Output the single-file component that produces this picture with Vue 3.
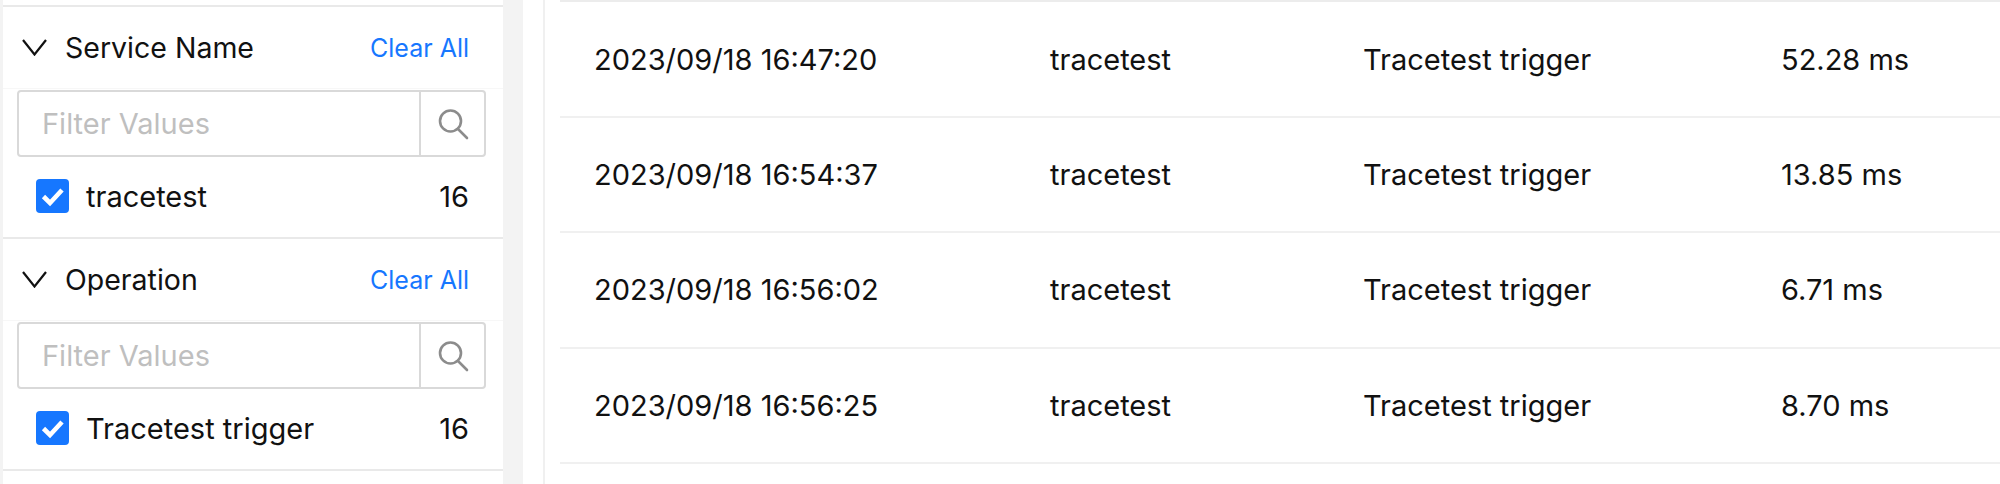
<template>
  <div class="page">
    <aside class="sidebar">
      <div class="stub-top"></div>
      <section v-for="filter in filters" :key="filter.title" class="filter">
        <header class="filter-head">
          <svg class="chevron" viewBox="0 0 25 17" fill="none">
            <path d="M1 1 L12.5 15.5 L24 1" stroke="#111" stroke-width="2.2" />
          </svg>
          <span class="filter-title">{{ filter.title }}</span>
          <a class="clear">Clear All</a>
        </header>
        <div class="search">
          <input class="search-input" type="text" placeholder="Filter Values" />
          <button class="search-btn" type="button">
            <svg viewBox="0 0 32 32" fill="none" stroke="#8c8c8c" stroke-width="2.6">
              <circle cx="13.5" cy="13" r="10.5" />
              <path d="M21 21 L30 30" stroke-linecap="round" />
            </svg>
          </button>
        </div>
        <label class="option">
          <span class="checkbox">
            <svg viewBox="0 0 33 33" fill="none">
              <path d="M7.5 17 L14 23.5 L26 10.5" stroke="#fff" stroke-width="4.6" />
            </svg>
          </span>
          <span class="option-name">{{ filter.option }}</span>
          <span class="option-count">{{ filter.count }}</span>
        </label>
      </section>
      <div class="stub-bottom"></div>
    </aside>

    <main class="content">
      <div class="table">
        <div v-for="row in rows" :key="row.time" class="row">
          <span>{{ row.time }}</span>
          <span>{{ row.service }}</span>
          <span>{{ row.operation }}</span>
          <span>{{ row.duration }}</span>
        </div>
      </div>
    </main>
  </div>
</template>

<script setup>
const filters = [
  { title: 'Service Name', option: 'tracetest', count: 16 },
  { title: 'Operation', option: 'Tracetest trigger', count: 16 }
]

const rows = [
  { time: '2023/09/18 16:47:20', service: 'tracetest', operation: 'Tracetest trigger', duration: '52.28 ms' },
  { time: '2023/09/18 16:54:37', service: 'tracetest', operation: 'Tracetest trigger', duration: '13.85 ms' },
  { time: '2023/09/18 16:56:02', service: 'tracetest', operation: 'Tracetest trigger', duration: '6.71 ms' },
  { time: '2023/09/18 16:56:25', service: 'tracetest', operation: 'Tracetest trigger', duration: '8.70 ms' }
]
</script>

<style>
html,
body {
  margin: 0;
  height: 484px;
  overflow: hidden;
}
</style>

<style scoped>
.page {
  display: flex;
  height: 484px;
  overflow: hidden;
  box-sizing: border-box;
  padding-left: 3px;
  background: #f3f3f3;
  color: #111;
  font-family: Inter, "Liberation Sans", sans-serif;
  font-size: 29px;
}

.sidebar {
  display: flex;
  flex-direction: column;
  gap: 2px;
  flex: none;
  width: 500px;
  background: #e9e9e9;
}

.stub-top {
  height: 5px;
  background: #fff;
}

.filter {
  flex: none;
  height: 230px;
  background: #fff;
}

.stub-bottom {
  flex: 1;
  background: #fff;
}

.filter-head {
  display: flex;
  align-items: center;
  height: 82px;
  box-sizing: border-box;
  padding: 0 34px 0 19px;
  border-bottom: 1px solid #f7f7f7;
}

.chevron {
  width: 25px;
  height: 17px;
  margin-right: 18px;
}

.filter-title {
  flex: 1;
  font-size: 28.5px;
}

.clear {
  color: #1677ff;
  font-size: 25px;
}

.search {
  display: flex;
  height: 67px;
  box-sizing: border-box;
  margin: 1px 17px 0 14px;
  border: 2px solid #d9d9d9;
  border-radius: 4px;
}

.search-input {
  flex: 1;
  min-width: 0;
  padding: 0 0 0 23px;
  border: 0;
  outline: 0;
  background: transparent;
  color: #111;
  font: inherit;
}

.search-input::placeholder {
  color: #bfbfbf;
}

.search-btn {
  display: flex;
  align-items: center;
  justify-content: center;
  width: 65px;
  flex: none;
  padding: 0;
  border: 0;
  border-left: 2px solid #d9d9d9;
  background: transparent;
}

.search-btn svg {
  width: 32px;
  height: 32px;
}

.option {
  display: flex;
  align-items: center;
  height: 34px;
  margin-top: 22px;
  padding: 0 34px 0 33px;
}

.checkbox {
  flex: none;
  width: 33px;
  height: 34px;
  margin-right: 17px;
  border-radius: 4px;
  background: #1677ff;
}

.checkbox svg {
  display: block;
  width: 33px;
  height: 34px;
}

.option-name {
  flex: 1;
}

.content {
  flex: 1;
  min-width: 0;
  margin-left: 20px;
  padding-left: 20px;
  background: #fff;
}

.table {
  box-sizing: border-box;
  height: 100%;
  padding-left: 15px;
  border-left: 2px solid #f0f0f0;
}

.row {
  display: grid;
  grid-template-columns: 456px 313px 418px 1fr;
  align-items: center;
  height: 115.5px;
  box-sizing: border-box;
  padding-left: 34px;
  border-bottom: 2px solid #f0f0f0;
}

.row:first-child {
  height: 117.5px;
  padding-top: 2px;
  border-top: 2px solid #ececec;
}
</style>
